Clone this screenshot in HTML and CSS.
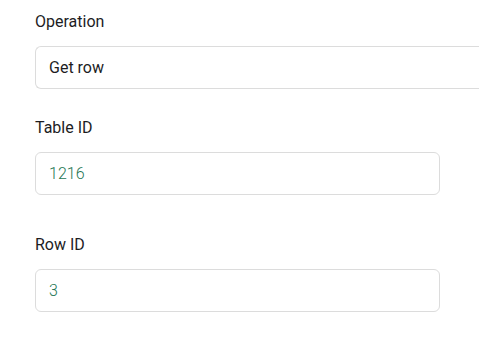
FILE: index.html
```html
<!DOCTYPE html>
<html>
<head>
<meta charset="utf-8">
<link rel="stylesheet" href="styles.css">
</head>
<body>
<div class="form">
  <div class="field">
    <div class="label">Operation</div>
    <div class="box select">Get row</div>
  </div>
  <div class="field">
    <div class="label">Table ID</div>
    <div class="box input">1216</div>
  </div>
  <div class="field">
    <div class="label">Row ID</div>
    <div class="box input">3</div>
  </div>
</div>
</body>
</html>
```
FILE: styles.css
```css
html, body {
  margin: 0;
  padding: 0;
  background: #ffffff;
  overflow: hidden;
}
body {
  font-family: Roboto, "Liberation Sans", sans-serif;
  width: 479px;
  height: 346px;
}
.form {
  padding: 12px 0 0 35px;
  display: flex;
  flex-direction: column;
}
.field {
  display: flex;
  flex-direction: column;
  margin-bottom: 29px;
}
.field + .field + .field { margin-top: 11px; }
.label {
  font-size: 16px;
  line-height: 20px;
  color: #1d1d1f;
  margin-bottom: 14px;
}
.box {
  box-sizing: border-box;
  height: 43px;
  border: 1px solid #dcdcdc;
  border-radius: 6px;
  padding: 0 13px;
  display: flex;
  align-items: center;
  font-size: 16px;
}
.select {
  width: 444px;
  border-right: none;
  border-radius: 6px 0 0 6px;
  color: #1d1d1f;
}
.input {
  width: 405px;
  color: #257654;
  font-weight: 300;
}
```
